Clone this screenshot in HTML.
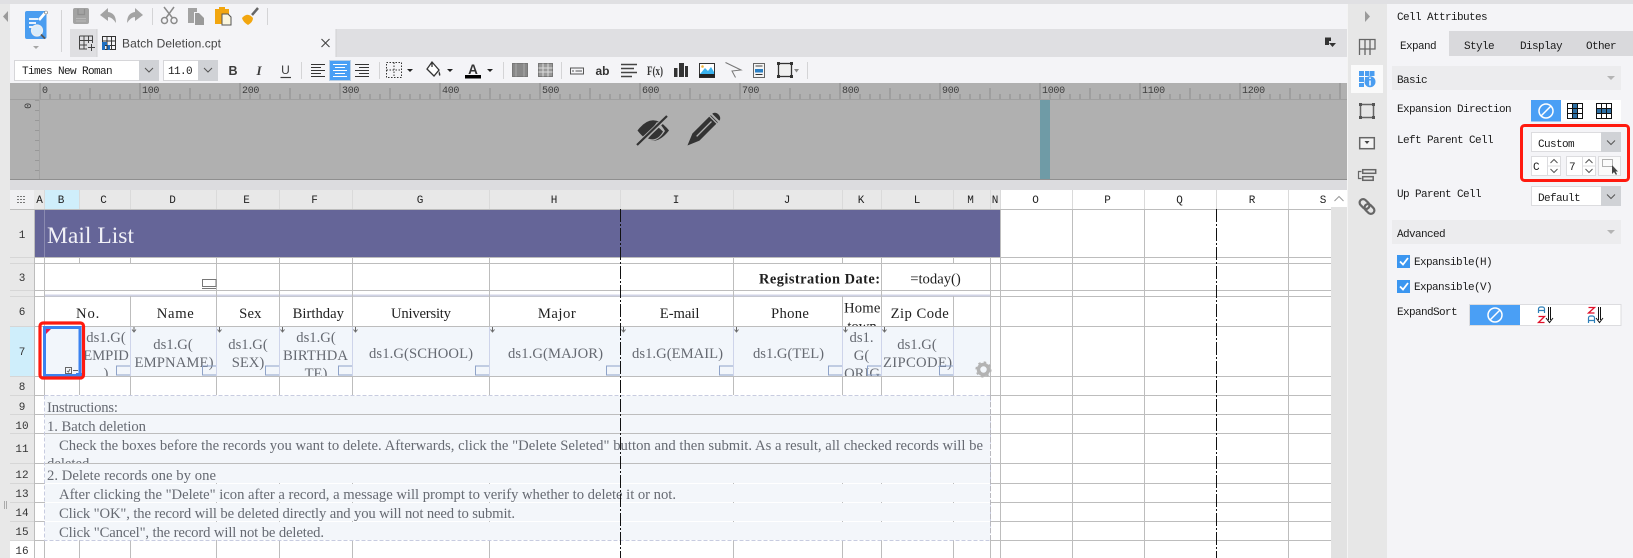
<!DOCTYPE html>
<html><head><meta charset="utf-8"><title>Batch Deletion</title>
<style>
html,body{margin:0;padding:0;background:#f4f4f7;width:1633px;height:558px;overflow:hidden}
svg{display:block}
.m{font-family:"Liberation Mono",monospace;font-size:11px;letter-spacing:-.6px;fill:#1c1c1c}
.c{font-family:"Liberation Mono",monospace;font-size:11px;text-anchor:middle;fill:#222}
.r{font-family:"Liberation Mono",monospace;font-size:11px;text-anchor:middle;fill:#333}
.t{font-family:"Liberation Mono",monospace;font-size:10px;letter-spacing:-.3px;fill:#3d3d3d}
.s{font-family:"Liberation Serif",serif;font-size:14.67px;fill:#1f1f1f}
.g{font-family:"Liberation Serif",serif;font-size:14.67px;fill:#666a72}
.a{text-anchor:middle}
.gl{stroke:#bdbdbd;stroke-width:1;fill:none}
.lv{stroke:#ced4ea;stroke-width:1;fill:none}
.ic{fill:none;stroke:#444;stroke-width:1.3}
</style></head><body>
<svg width="1633" height="558" viewBox="0 0 1633 558" xmlns="http://www.w3.org/2000/svg">
<defs>
<pattern id="hr" x="39.5" y="83" width="100" height="17" patternUnits="userSpaceOnUse">
<path d="M.5 0V16M50.5 5V16M10.5 11V16M20.5 11V16M30.5 11V16M40.5 11V16M60.5 11V16M70.5 11V16M80.5 11V16M90.5 11V16" stroke="#8c8c8c" fill="none"/>
</pattern>
<pattern id="vr" x="23" y="100" width="16" height="10" patternUnits="userSpaceOnUse">
<path d="M12 .5H16" stroke="#989898" fill="none"/>
</pattern>
<clipPath id="r7c"><rect x="81" y="327" width="49" height="49"/></clipPath>
<clipPath id="r7f"><rect x="280" y="327" width="72" height="49"/></clipPath>
<clipPath id="r7k"><rect x="843" y="327" width="38" height="49"/></clipPath>
<clipPath id="r6k"><rect x="843" y="297" width="38" height="29"/></clipPath>
<clipPath id="r11"><rect x="45" y="434" width="945" height="29"/></clipPath>
</defs>

<!-- base -->
<rect width="1633" height="558" fill="#f4f4f7"/>
<rect width="1633" height="4" fill="#e0e0e3"/>
<rect y="4" width="10" height="554" fill="#e8e8e8"/>
<path d="M8 11V22L3 16.500Z" fill="#9a9a9a"/>
<path d="M4.500 501V509M6.500 501V509" stroke="#aaa" fill="none"/>

<!-- logo -->
<rect x="25" y="11" width="21.500" height="28" rx="2" fill="#4a9df0"/>
<path d="M29 19H38M29 23H36M29 27H33" stroke="#fff" stroke-width="1.700"/>
<path d="M39 20L45 13" stroke="#fff" stroke-width="2.800"/><circle cx="46" cy="12.500" r="1.500" fill="#fff" stroke="#777" stroke-width=".6"/>
<circle cx="37" cy="30.500" r="5.500" fill="#d9ecfb" stroke="#eee" stroke-width="1.200"/>
<path d="M41 34.500L45 38.500" stroke="#555" stroke-width="1.800"/>
<path d="M33 46H39L36 49Z" fill="#a6a6a6"/>
<path d="M61.500 10V52" stroke="#d4d4d6"/>

<!-- top icons -->
<path d="M73 10a2 2 0 0 1 2-2H87a2 2 0 0 1 2 2V22a2 2 0 0 1-2 2H75a2 2 0 0 1-2-2Z" fill="#a3a3a3"/>
<path d="M78 9V14.500H84.500V9" fill="none" stroke="#8f8f8f" stroke-width="1.200"/>
<path d="M76 18.500H86M76 21H86" stroke="#b8b8b8" fill="none"/>
<path d="M100 15L108 8V12Q116 13 116 23Q112 17 108 17V21Z" fill="#a3a3a3"/>
<path d="M143 15L135 8V12Q127 13 127 23Q131 17 135 17V21Z" fill="#a3a3a3"/>
<path d="M152.500 8V25" stroke="#d4d4d6"/>
<g fill="none" stroke="#8a8a8a" stroke-width="1.500"><circle cx="164.500" cy="20.500" r="3"/><circle cx="174" cy="20.500" r="3"/><path d="M166 18L174 7M172.500 18L164 7"/></g>
<path d="M188 8H197V12H194V23H188Z" fill="#a3a3a3"/><path d="M195 13H199L204 18V25H195Z" fill="#9a9a9a"/>
<path d="M215 9H219V7H225V9H229V14H222V24H215Z" fill="#f2a60f"/><path d="M222 14H228L231 17V25H222Z" fill="#fbf6de" stroke="#555" stroke-width="1"/>
<path d="M252 15L258 8" stroke="#666" stroke-width="2.500"/><path d="M243 17Q248 12 253 18Q253 22 248 25Q243 22 242 18Z" fill="#f2a60f"/>
<path d="M267.500 8V25" stroke="#d4d4d6"/>

<!-- tab strip -->
<rect x="70" y="29" width="1277" height="28" fill="#dfdfe2"/>
<rect x="97" y="29" width="239" height="28" fill="#f4f4f7"/>
<path d="M97 29V57M336 29V57" stroke="#d0d0d3"/>
<path d="M79.500 36H92.500V43M79.500 36V49H87M79.500 40.500H92.500M79.500 45H87M84 36V49M88.500 36V43M88 47.500H95M91.500 44V51" fill="none" stroke="#444" stroke-width="1"/>
<path d="M102.500 36.500H115.500V49.500H102.500ZM102.500 41H115.500M102.500 45.500H115.500M107 36.500V49.500M111.500 36.500V49.500" fill="none" stroke="#333"/>
<path d="M102 42H107V45H105V50H102ZM107.500 45H110V50H107.500Z" fill="#1d6fc2"/>
<text x="122" y="47.500" font-family="Liberation Sans,sans-serif" font-size="12" fill="#444" textLength="99" lengthAdjust="spacing">Batch Deletion.cpt</text>
<path d="M321.500 39L329.500 47M329.500 39L321.500 47" stroke="#444" stroke-width="1.100" fill="none"/>
<path d="M1325 37.500H1331V41H1329V45H1325Z" fill="#333"/><path d="M1329 43H1336L1332.500 47Z" fill="#333"/>

<!-- format toolbar -->
<rect x="10" y="57" width="1337" height="26" fill="#f4f4f7"/>
<rect x="14.500" y="60.500" width="144" height="20" fill="#fff" stroke="#d6d6d9"/>
<rect x="139" y="60" width="20" height="21" fill="#d0d2d6"/>
<path d="M145 68L149 72L153 68" fill="none" stroke="#555"/>
<text class="m" x="22" y="74" fill="#111">Times New Roman</text>
<rect x="163.500" y="60.500" width="54" height="20" fill="#fff" stroke="#d6d6d9"/>
<rect x="198" y="60" width="20" height="21" fill="#d0d2d6"/>
<path d="M204 68L208 72L212 68" fill="none" stroke="#555"/>
<text class="m" x="168" y="74">11.0</text>
<text x="233" y="75" font-family="Liberation Sans,sans-serif" font-weight="700" font-size="12.500" text-anchor="middle" fill="#3b3b3b">B</text>
<text x="259" y="75" font-family="Liberation Serif,serif" font-style="italic" font-weight="700" font-size="13" text-anchor="middle" fill="#3b3b3b">I</text>
<text x="285.500" y="74" font-family="Liberation Sans,sans-serif" font-size="12" text-anchor="middle" fill="#3b3b3b">U</text>
<path d="M280.500 77.500H291" stroke="#3b3b3b" stroke-width="1.200"/>
<path d="M301.500 62V79" stroke="#d4d4d6"/>
<path d="M311 64.500H325M311 67.500H321M311 70.500H325M311 73.500H321M311 76.500H325" stroke="#333" fill="none"/>
<rect x="329.500" y="60.500" width="21" height="20" fill="#4a9ff5" stroke="#b9cfe6"/>
<path d="M333 64.500H347M335 67.500H345M333 70.500H347M335 73.500H345M333 76.500H347" stroke="#fff" fill="none"/>
<path d="M355 64.500H369M359 67.500H369M355 70.500H369M359 73.500H369M355 76.500H369" stroke="#333" fill="none"/>
<path d="M379.500 62V79" stroke="#d4d4d6"/>
<path d="M386.500 62.500H401.500V77.500H386.500ZM394 62.500V77.500M386.500 70H401.500" fill="none" stroke="#333" stroke-dasharray="1.500 1.500"/>
<path d="M407 69H413L410 72Z" fill="#222"/>
<path d="M432 62L439 70L434 76L427 69ZM432 62V67" fill="#fff" stroke="#333" stroke-width="1.300"/><path d="M439 71Q441 74 440 76Q438 75 439 71Z" fill="#333"/>
<path d="M447 69H453L450 72Z" fill="#222"/>
<text x="473" y="74" font-family="Liberation Sans,sans-serif" font-weight="700" font-size="13.500" text-anchor="middle" fill="#333">A</text>
<rect x="465" y="75" width="16" height="3.500" fill="#000"/>
<path d="M487 69H493L490 72Z" fill="#222"/>
<path d="M503.500 62V79" stroke="#d4d4d6"/>
<rect x="512.500" y="63.500" width="15" height="13" fill="#888" stroke="#777"/><path d="M516 63.500V76.500M524 63.500V76.500" stroke="#aaa"/>
<rect x="538.500" y="63.500" width="14" height="13" fill="#999" stroke="#777"/><path d="M538.500 68H552.500M538.500 72H552.500M543 63.500V76.500M548 63.500V76.500" stroke="#ddd"/>
<path d="M561.500 62V79" stroke="#d4d4d6"/>
<rect x="570.500" y="68" width="13" height="6" fill="none" stroke="#555"/><path d="M572 71H574M575.500 71H582" stroke="#555"/>
<text x="602.500" y="75" font-family="Liberation Sans,sans-serif" font-weight="700" font-size="12" text-anchor="middle" fill="#333">ab</text>
<path d="M621 64.500H637M621 68.500H634M621 72.500H637M621 76.500H632" stroke="#444" stroke-width="1.500" fill="none"/>
<text x="655" y="75" font-family="Liberation Serif,serif" font-weight="700" font-size="13" text-anchor="middle" fill="#333" textLength="16" lengthAdjust="spacingAndGlyphs">F(x)</text>
<path d="M674 68H677.500V77H674ZM679 63H684V77H679ZM685 66H688V77H685Z" fill="#333"/>
<rect x="699.500" y="63.500" width="15" height="14" fill="#fff" stroke="#333"/><rect x="699" y="74" width="16" height="3.500" fill="#222"/>
<path d="M700 74L705 68L708 71L711 67L714 72V74Z" fill="#39b3ef"/><circle cx="702.500" cy="66.500" r="1.300" fill="#f3b53a"/>
<path d="M725.500 62.500L741 70L732 71L735.500 77.500" fill="none" stroke="#777"/>
<rect x="753.500" y="63.500" width="11" height="14" fill="#f5f5f5" stroke="#666"/><path d="M755.500 66H762.500" stroke="#444"/><rect x="755" y="69" width="8" height="3.500" fill="#2b7fc3"/><path d="M755.500 74.500H762.500" stroke="#333"/>
<rect x="778.500" y="63.500" width="13" height="13" fill="#f0f0f0" stroke="#333" stroke-width="1.300"/>
<rect x="777" y="62" width="3" height="3" fill="#333"/><rect x="790" y="62" width="3" height="3" fill="#333"/><rect x="777" y="75" width="3" height="3" fill="#333"/><rect x="790" y="75" width="3" height="3" fill="#333"/>
<path d="M794 69H799L796.500 72.500Z" fill="#888"/>
<path d="M807.500 62V79" stroke="#d4d4d6"/>

<!-- ruler / gray paper -->
<rect x="10" y="83" width="1337" height="97" fill="#b0b0b0"/>
<rect x="39.500" y="83" width="1307.500" height="16" fill="url(#hr)"/>
<rect x="23" y="100" width="16" height="79" fill="url(#vr)"/>
<rect x="10" y="99" width="1337" height="1" fill="#a0a0a0"/>
<path d="M39.500 83V179" stroke="#a2a2a2"/>
<rect x="10" y="179" width="1337" height="1" fill="#8f8f8f"/>
<rect x="1040" y="100" width="10" height="79" fill="#6f9ba6"/>
<g class="t">
<text x="42" y="93">0</text><text x="142" y="93">100</text><text x="242" y="93">200</text><text x="342" y="93">300</text><text x="442" y="93">400</text><text x="542" y="93">500</text><text x="642" y="93">600</text><text x="742" y="93">700</text><text x="842" y="93">800</text><text x="942" y="93">900</text><text x="1042" y="93">1000</text><text x="1142" y="93">1100</text><text x="1242" y="93">1200</text>
</g>
<text class="t" transform="translate(31,106) rotate(-90)" text-anchor="middle">0</text>

<!-- eye + pencil -->
<g>
<path d="M637.500 130.500Q653 110 669 130.500Q653 151 637.500 130.500Z" fill="#333"/>
<path d="M645 139Q656 145 665 131Q661 124 657 122Z" fill="#b0b0b0"/>
<path d="M648 138.500Q657 142 663 131.500L658 127Z" fill="#333"/>
<path d="M636 146L668 116" stroke="#b0b0b0" stroke-width="4.500"/>
<path d="M637 145L667 116" stroke="#333" stroke-width="2.200"/>
</g>
<g transform="rotate(45 703 130)">
<path d="M698 114V140L703 152L708 140V114Z" fill="#333"/>
<path d="M698 112a5 4 0 0 1 10 0Z" fill="#333"/>
<path d="M703 118V139" stroke="#b0b0b0" stroke-width="1.300"/>
<path d="M697 115.500H709" stroke="#b0b0b0" stroke-width="1.300"/>
</g>

<!-- band above sheet -->
<rect x="10" y="180" width="1337" height="10" fill="#dcdcdf"/>

<!-- sheet -->
<rect x="10" y="190" width="1321" height="368" fill="#fff"/>
<rect x="10" y="190" width="24" height="368" fill="#e8e8e8"/>
<rect x="10" y="326" width="24" height="50" fill="#cfeefb"/>
<rect x="10" y="540" width="24" height="18" fill="#fff"/>
<rect x="10" y="190" width="24" height="19" fill="#f0f0f2"/>
<path d="M17 196.500h2M20 196.500h2M23 196.500h2M17 199.500h2M20 199.500h2M23 199.500h2M17 202.500h2M20 202.500h2M23 202.500h2" stroke="#777" fill="none"/>
<rect x="34" y="190" width="967" height="19" fill="#e8e8e8"/>
<rect x="45" y="190" width="34" height="19" fill="#cfeefb"/>
<path d="M44.500 190V209M79.500 190V209M130.500 190V209M216.500 190V209M279.500 190V209M352.500 190V209M489.500 190V209M620.500 190V209M733.500 190V209M842.500 190V209M881.500 190V209M953.500 190V209M990.500 190V209M1000.500 190V209M1072.500 190V209M1144.500 190V209M1216.500 190V209M1288.500 190V209" stroke="#dadada" fill="none"/>
<g class="c">
<text x="39.500" y="203">A</text><text x="61" y="203">B</text><text x="103.500" y="203">C</text><text x="172.500" y="203">D</text><text x="246.500" y="203">E</text><text x="314.500" y="203">F</text><text x="420" y="203">G</text><text x="554" y="203">H</text><text x="676" y="203">I</text><text x="787" y="203">J</text><text x="861" y="203">K</text><text x="917" y="203">L</text><text x="970.500" y="203">M</text><text x="995" y="203">N</text><text x="1035.500" y="203">O</text><text x="1107.500" y="203">P</text><text x="1179.500" y="203">Q</text><text x="1252" y="203">R</text><text x="1323" y="203">S</text>
</g>

<!-- fills -->
<rect x="35" y="210" width="965" height="47" fill="#656598"/>
<rect x="45" y="327" width="945" height="49" fill="#f2f6fb"/>
<rect x="45" y="396" width="945" height="144" fill="#f3f6fa"/>

<!-- horizontal grid -->
<path class="gl" d="M10 209.500H1331M34 257.500H1331M34 263.500H1331M34 290.500H1331M34 296.500H1331M34 326.500H1331M34 376.500H1331M34 395.500H45M990 395.500H1331M34 414.500H1331M34 433.500H1331M34 463.500H1331M34 483.500H45M990 483.500H1331M34 502.500H45M990 502.500H1331M34 521.500H45M990 521.500H1331M34 540.500H45M990 540.500H1331"/>
<path d="M10 257.500H34M10 263.500H34M10 290.500H34M10 296.500H34M10 326.500H34M10 376.500H34M10 395.500H34M10 414.500H34M10 433.500H34M10 463.500H34M10 483.500H34M10 502.500H34M10 521.500H34M10 540.500H34" stroke="#d6d6d6" fill="none"/>
<path d="M45 483.500H990M45 502.500H990M45 521.500H990" stroke="#fff" fill="none"/>
<rect x="44" y="294.500" width="946" height="2" fill="#d0d3e5"/>

<!-- vertical grid -->
<path class="gl" d="M34.500 209V558M44.500 257V395M44.500 540V558
M79.500 257V263M79.500 376V395M79.500 540V558
M130.500 257V263M130.500 296V326M130.500 376V395M130.500 540V558
M216.500 257V326M216.500 376V395M216.500 540V558
M279.500 257V326M279.500 376V395M279.500 540V558
M352.500 257V326M352.500 376V395M352.500 540V558
M489.500 257V326M489.500 376V395M489.500 540V558
M733.500 257V326M733.500 376V395M733.500 540V558
M842.500 257V263M842.500 296V326M842.500 376V395M842.500 540V558
M881.500 257V326M881.500 376V395M881.500 540V558
M953.500 257V263M953.500 296V326M953.500 376V395M953.500 540V558
M990.500 257V395M990.500 540V558M1000.500 209V558M1072.500 209V558M1144.500 209V558M1288.500 209V558"/>
<path d="M44.500 210V257" stroke="#8a8ab0" fill="none"/>
<path class="lv" d="M130.500 327V376M216.500 327V376M279.500 327V376M352.500 327V376M489.500 327V376M733.500 327V376M842.500 327V376M881.500 327V376M953.500 327V376"/>
<!-- dashed block outline -->
<path d="M44.500 395.500H990.500V540.500H44.500Z" fill="none" stroke="#c8cce0" stroke-dasharray="4 2"/>
<path d="M990.500 395V540" fill="none" stroke="#b9b9bf" stroke-dasharray="5 2"/>
<!-- tiny ticks -->
<path d="M216.500 483V484M279.500 483V484M352.500 483V484M489.500 483V484M733.500 483V484M842.500 483V484M881.500 483V484M953.500 483V484M216.500 502V503M279.500 502V503M352.500 502V503M489.500 502V503M733.500 502V503M842.500 502V503M881.500 502V503M953.500 502V503M216.500 521V522M279.500 521V522M352.500 521V522M489.500 521V522M733.500 521V522M842.500 521V522M881.500 521V522M953.500 521V522" stroke="#bdbdbd" fill="none"/>

<!-- row numbers -->
<g class="r">
<text x="22" y="238">1</text><text x="22" y="281">3</text><text x="22" y="315">6</text><text x="22" y="355">7</text><text x="22" y="390">8</text><text x="22" y="410">9</text><text x="22" y="429">10</text><text x="22" y="452">11</text><text x="22" y="478">12</text><text x="22" y="497">13</text><text x="22" y="516">14</text><text x="22" y="535">15</text><text x="22" y="554">16</text>
</g>

<!-- cell text -->
<text x="47" y="243" font-family="Liberation Serif,serif" font-size="23.500" fill="#f1f1f7" textLength="87" lengthAdjust="spacing">Mail List</text>
<rect x="202.500" y="279.500" width="13.500" height="7" fill="#fff" stroke="#777"/><path d="M202 288.500H216" stroke="#777" fill="none"/>
<text x="880" y="283.500" font-family="Liberation Serif,serif" font-weight="700" font-size="14.400" fill="#1f1f1f" text-anchor="end" textLength="121" lengthAdjust="spacing">Registration Date:</text>
<text class="s a" x="935.500" y="283.500">=today()</text>

<g class="s a">
<text x="87.700" y="318" textLength="23.300" lengthAdjust="spacing">No.</text>
<text x="175.300" y="318" textLength="37" lengthAdjust="spacing">Name</text>
<text x="250.300" y="318" textLength="22.300" lengthAdjust="spacing">Sex</text>
<text x="318.300" y="318" textLength="51.300" lengthAdjust="spacing">Birthday</text>
<text x="421" y="318" textLength="60" lengthAdjust="spacing">University</text>
<text x="556.800" y="318" textLength="37.900" lengthAdjust="spacing">Major</text>
<text x="679.600" y="318" textLength="39.600" lengthAdjust="spacing">E-mail</text>
<text x="790" y="318" textLength="37.900" lengthAdjust="spacing">Phone</text>
<text x="919.700" y="318" textLength="58.200" lengthAdjust="spacing">Zip Code</text>
</g>
<text class="s a" x="862.200" y="312.500" textLength="36.500" lengthAdjust="spacing">Home</text>
<text class="s a" x="862" y="331" clip-path="url(#r6k)">town</text>

<!-- row 7 -->
<g class="g a">
<g clip-path="url(#r7c)"><text x="106" y="342">ds1.G(</text><text x="106" y="360">EMPID</text><text x="106" y="378">)</text></g>
<text x="173" y="349">ds1.G(</text><text x="174" y="367" textLength="79" lengthAdjust="spacing">EMPNAME)</text>
<text x="248" y="349">ds1.G(</text><text x="248" y="367">SEX)</text>
<g clip-path="url(#r7f)"><text x="316" y="342">ds1.G(</text><text x="315.500" y="360" textLength="65" lengthAdjust="spacing">BIRTHDA</text><text x="316" y="378">TE)</text></g>
<text x="421" y="358" textLength="104" lengthAdjust="spacing">ds1.G(SCHOOL)</text>
<text x="555.500" y="358" textLength="95" lengthAdjust="spacing">ds1.G(MAJOR)</text>
<text x="677.500" y="358" textLength="91" lengthAdjust="spacing">ds1.G(EMAIL)</text>
<text x="788.500" y="358" textLength="71" lengthAdjust="spacing">ds1.G(TEL)</text>
<g clip-path="url(#r7k)"><text x="861.500" y="342">ds1.</text><text x="861.500" y="360">G(</text><text x="862" y="378">ORIG</text></g>
<text x="917" y="349">ds1.G(</text><text x="917.500" y="367" textLength="69" lengthAdjust="spacing">ZIPCODE)</text>
</g>
<!-- blue corner boxes -->
<g fill="none" stroke="#8fa3c8">
<path d="M130 366H116.500V375H130"/><path d="M216 366H202.500V375H216"/><path d="M279 366H265.500V375H279"/><path d="M352 366H338.500V375H352"/><path d="M489 366H475.500V375H489"/><path d="M620 366H606.500V375H620"/><path d="M733 366H719.500V375H733"/><path d="M842 366H828.500V375H842"/><path d="M881 366H867.500V375H881"/><path d="M953 366H939.500V375H953"/>
</g>
<!-- expand arrows -->
<g fill="none" stroke="#666" stroke-width="1">
<path d="M134 327V331M132 329.500L134 332L136 329.500"/><path d="M219.500 327V331M217.500 329.500L219.500 332L221.500 329.500"/><path d="M282.500 327V331M280.500 329.500L282.500 332L284.500 329.500"/><path d="M355.500 327V331M353.500 329.500L355.500 332L357.500 329.500"/><path d="M492.500 327V331M490.500 329.500L492.500 332L494.500 329.500"/><path d="M623.500 327V331M621.500 329.500L623.500 332L625.500 329.500"/><path d="M736.500 327V331M734.500 329.500L736.500 332L738.500 329.500"/><path d="M845.500 327V331M843.500 329.500L845.500 332L847.500 329.500"/><path d="M884.500 327V331M882.500 329.500L884.500 332L886.500 329.500"/>
</g>
<!-- gear -->
<circle cx="983.500" cy="369.500" r="5" fill="none" stroke="#b3b3b3" stroke-width="3.500"/>
<circle cx="983.500" cy="369.500" r="7.200" fill="none" stroke="#b3b3b3" stroke-width="1.800" stroke-dasharray="2.500 3.150"/>

<!-- instructions -->
<g class="g">
<text x="47" y="412" textLength="71" lengthAdjust="spacing">Instructions:</text>
<text x="47" y="431" textLength="99" lengthAdjust="spacing">1. Batch deletion</text>
<text x="59" y="450" textLength="924" lengthAdjust="spacing" xml:space="preserve">Check the boxes before the records you want to delete. Afterwards, click the "Delete Seleted" button and then submit. As a result, all checked records will be</text>
<text x="47" y="468" clip-path="url(#r11)">deleted</text>
<text x="47" y="480" textLength="169" lengthAdjust="spacing">2. Delete records one by one</text>
<text x="59" y="499" textLength="617" lengthAdjust="spacing">After clicking the "Delete" icon after a record, a message will prompt to verify whether to delete it or not.</text>
<text x="59" y="518" textLength="456" lengthAdjust="spacing">Click "OK", the record will be deleted directly and you will not need to submit.</text>
<text x="59" y="537" textLength="265" lengthAdjust="spacing">Click "Cancel", the record will not be deleted.</text>
</g>

<!-- page breaks -->
<path d="M620.500 209V558M1216.500 209V558" stroke="#111" stroke-width="1" stroke-dasharray="13 2 2 2" fill="none"/>

<!-- selection -->
<rect x="45" y="327" width="35" height="48" fill="#f2f6fb"/>
<rect x="44.500" y="327.500" width="35.500" height="48" fill="none" stroke="#3b82f0" stroke-width="3"/>
<path d="M46 329H51L46 334Z" fill="#e8174e"/>
<rect x="65.500" y="367.500" width="6" height="6" fill="none" stroke="#666"/><path d="M67 371L68.500 372L70 369" stroke="#666" fill="none"/><path d="M73 370.500H78" stroke="#666" fill="none"/>
<rect x="76" y="373" width="6" height="5" fill="#3b82f0"/>
<rect x="40" y="323" width="43.500" height="55" rx="3" fill="none" stroke="#ff1a0f" stroke-width="3.200"/>

<!-- scrollbar -->
<rect x="1331" y="190" width="16" height="368" fill="#e2e2e2"/>
<rect x="1331" y="190" width="16" height="17" fill="#fff"/>
<path d="M1334.500 201L1339 196.500L1343.500 201" fill="none" stroke="#999"/>

<!-- rail -->
<rect x="1347" y="4" width="40" height="554" fill="#e7e7e7"/>
<rect x="1347" y="4" width="1" height="554" fill="#f4f4f4"/>
<path d="M1365 11V22L1370 16.500Z" fill="#9a9a9a"/>
<rect x="1351" y="65" width="32" height="28" fill="#fafafa"/>
<path d="M1359.500 39.500H1375V49H1359.500ZM1359.500 49V55M1365 39.500V55M1370 39.500V55" fill="none" stroke="#666" stroke-width="1.300"/>
<g fill="#4a9df0"><rect x="1359" y="71" width="5" height="5"/><rect x="1365" y="71" width="4.500" height="5"/><rect x="1370" y="71" width="4.500" height="5"/><rect x="1359" y="77" width="5" height="5"/><rect x="1365" y="77" width="2" height="5"/><rect x="1359" y="83" width="5" height="4"/><circle cx="1370" cy="81.700" r="5.500"/></g>
<path d="M1370 77.500V79M1370 80.500V85.500" stroke="#fff" stroke-width="1.500"/>
<rect x="1360.500" y="104.500" width="13" height="13" fill="none" stroke="#666" stroke-width="1.500"/>
<rect x="1359" y="103" width="3" height="3" fill="#555"/><rect x="1372" y="103" width="3" height="3" fill="#555"/><rect x="1359" y="116" width="3" height="3" fill="#555"/><rect x="1372" y="116" width="3" height="3" fill="#555"/>
<rect x="1359.700" y="137.700" width="14.600" height="11" fill="#f4f4f4" stroke="#666" stroke-width="1.500"/><path d="M1364.500 141H1369.500L1367 144Z" fill="#444"/>
<path d="M1361.500 171.500H1358.500V178.500H1361.500" fill="none" stroke="#666" stroke-width="1.200"/>
<rect x="1362.700" y="169.700" width="13" height="3.600" fill="none" stroke="#666" stroke-width="1.500"/>
<rect x="1362.700" y="176.700" width="10.500" height="3.600" fill="none" stroke="#666" stroke-width="1.500"/>
<g fill="none" stroke="#666" stroke-width="2.200" transform="rotate(-45 1367 206.500)"><rect x="1363.500" y="197.500" width="7" height="11" rx="3.500"/><rect x="1363.500" y="204.500" width="7" height="11" rx="3.500"/></g>

<!-- panel -->
<rect x="1387" y="4" width="246" height="554" fill="#f4f4f7"/>
<text class="m" x="1397" y="20">Cell Attributes</text>
<rect x="1387" y="31" width="246" height="25" fill="#d9d9dc"/>
<rect x="1387" y="31" width="62" height="25" fill="#f4f4f7"/>
<text class="m" x="1400" y="49" fill="#111">Expand</text><text class="m" x="1464" y="49">Style</text><text class="m" x="1520" y="49">Display</text><text class="m" x="1586" y="49">Other</text>
<rect x="1392" y="66" width="229" height="24" fill="#ececee"/>
<text class="m" x="1397" y="83">Basic</text>
<path d="M1607 76H1615L1611 80Z" fill="#b4b4b4"/>
<text class="m" x="1397" y="112">Expansion Direction</text>
<rect x="1531" y="100" width="90" height="21.500" fill="#fff"/>
<rect x="1531" y="100" width="30" height="21.500" fill="#4a9ff5"/>
<circle cx="1546" cy="111" r="7" fill="none" stroke="#fff" stroke-width="1.500"/><path d="M1541 116L1551 106" stroke="#fff" stroke-width="1.500"/>
<rect x="1567" y="103" width="16" height="16" fill="#fff"/>
<rect x="1572.500" y="103.500" width="5" height="15" fill="#2d6fa3"/>
<path d="M1567.500 103.500H1582.500V118.500H1567.500ZM1572.500 103.500V118.500M1577.500 103.500V118.500M1567.500 108.500H1582.500M1567.500 113.500H1582.500" fill="none" stroke="#111"/>
<rect x="1596.500" y="108.500" width="15" height="5" fill="#2d6fa3"/>
<path d="M1596.500 103.500H1611.500V118.500H1596.500ZM1601.500 103.500V118.500M1606.500 103.500V118.500M1596.500 108.500H1611.500M1596.500 113.500H1611.500" fill="none" stroke="#111"/>
<text class="m" x="1397" y="143">Left Parent Cell</text>
<rect x="1531.500" y="132.500" width="89" height="19" fill="#fff" stroke="#dcdcdf"/><rect x="1601" y="132" width="20" height="20" fill="#d0d2d6"/>
<path d="M1607 140.500L1611 144.500L1615 140.500" fill="none" stroke="#555"/>
<text class="m" x="1538" y="147">Custom</text>
<rect x="1531.500" y="156.500" width="29" height="19" fill="#fff" stroke="#dcdcdf"/><path d="M1547.500 156V176M1547.500 166H1561" stroke="#dcdcdf"/>
<path d="M1550.500 163L1554 159.500L1557.500 163M1550.500 169L1554 172.500L1557.500 169" fill="none" stroke="#555"/>
<text class="m" x="1533" y="170" fill="#111">C</text>
<rect x="1566.500" y="156.500" width="29" height="19" fill="#fff" stroke="#dcdcdf"/><path d="M1582.500 156V176M1582.500 166H1596" stroke="#dcdcdf"/>
<path d="M1585.500 163L1589 159.500L1592.500 163M1585.500 169L1589 172.500L1592.500 169" fill="none" stroke="#555"/>
<text class="m" x="1569" y="170">7</text>
<rect x="1598.500" y="156.500" width="22" height="19" fill="#fafafa" stroke="#dcdcdf"/>
<rect x="1602.500" y="159.500" width="10" height="7" fill="none" stroke="#666" stroke-dasharray="1 1"/>
<path d="M1612 165V174L1614 172L1616 175L1617 174L1615.500 171.500H1618Z" fill="#444"/>
<rect x="1521.500" y="125.500" width="107" height="55" rx="3" fill="none" stroke="#ff1a0f" stroke-width="3"/>
<text class="m" x="1397" y="197">Up Parent Cell</text>
<rect x="1531.500" y="186.500" width="89" height="19" fill="#fff" stroke="#dcdcdf"/><rect x="1601" y="186" width="20" height="20" fill="#d0d2d6"/>
<path d="M1607 194.500L1611 198.500L1615 194.500" fill="none" stroke="#555"/>
<text class="m" x="1538" y="201">Default</text>
<rect x="1392" y="220" width="229" height="24" fill="#ececee"/>
<text class="m" x="1397" y="237">Advanced</text>
<path d="M1607 230H1615L1611 234Z" fill="#b4b4b4"/>
<rect x="1397" y="255" width="13" height="13" fill="#3b96f0"/><path d="M1400 261.500L1403 264.500L1408 258" fill="none" stroke="#fff" stroke-width="1.800"/>
<text class="m" x="1414" y="265">Expansible(H)</text>
<rect x="1397" y="280" width="13" height="13" fill="#3b96f0"/><path d="M1400 286.500L1403 289.500L1408 283" fill="none" stroke="#fff" stroke-width="1.800"/>
<text class="m" x="1414" y="290">Expansible(V)</text>
<text class="m" x="1397" y="315">ExpandSort</text>
<rect x="1469.500" y="304.500" width="151.500" height="21" fill="#fff" stroke="#dcdcdf"/>
<rect x="1470" y="305" width="50" height="20" fill="#4a9ff5"/>
<circle cx="1495" cy="315" r="7" fill="none" stroke="#fff" stroke-width="1.500"/><path d="M1490 320L1500 310" stroke="#fff" stroke-width="1.500"/>
<path d="M1538.500 313V309a2 2 0 0 1 2-2h2a2 2 0 0 1 2 2V313M1538.500 310.500H1544.500" fill="none" stroke="#2d7fb8" stroke-width="1.200"/>
<path d="M1538.500 316.500H1544.500L1538.500 322.500H1544.500" fill="none" stroke="#e0112b" stroke-width="1.300"/>
<path d="M1548.500 307V320M1550.500 307V320M1546 318L1549.500 322.500L1553 318" fill="none" stroke="#111"/>
<path d="M1588.500 307.500H1594.500L1588.500 313H1594.500" fill="none" stroke="#e0112b" stroke-width="1.300"/>
<path d="M1588.500 323V318a2 2 0 0 1 2-2h2a2 2 0 0 1 2 2V323M1588.500 320.500H1594.500" fill="none" stroke="#2d7fb8" stroke-width="1.200"/>
<path d="M1598.500 307V320M1600.500 307V320M1596 318L1599.500 322.500L1603 318" fill="none" stroke="#111"/>
</svg>
</body></html>
